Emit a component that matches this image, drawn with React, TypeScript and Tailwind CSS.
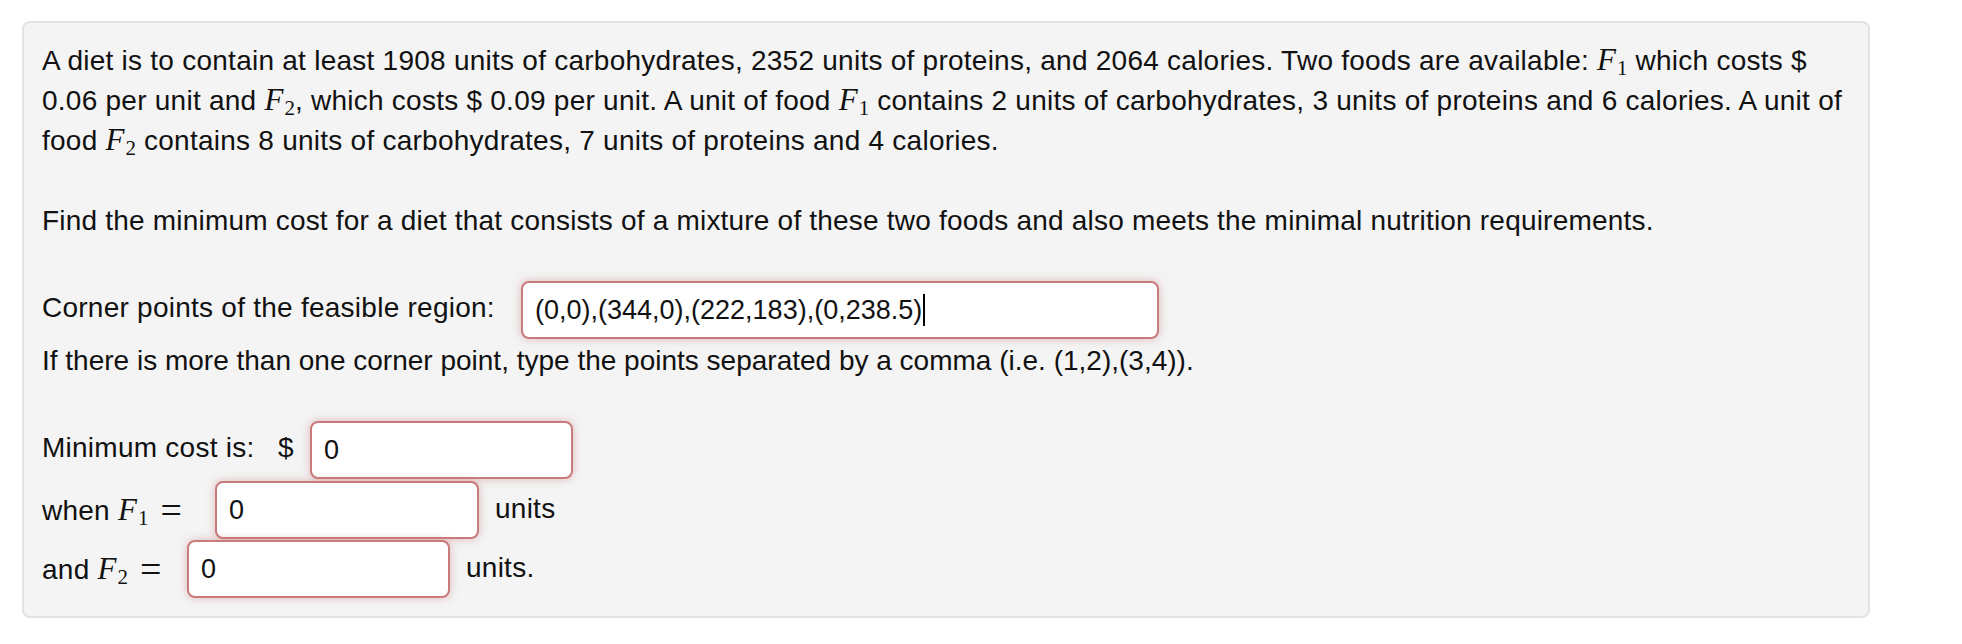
import React from "react";

const F = ({ n }: { n: string }) => (
  <span className="inline-flex items-baseline tracking-normal" style={{ fontFamily: '"Liberation Serif", "DejaVu Serif", serif' }}>
    <span className="italic text-[31px] leading-none">F</span>
    <span className="text-[21px] leading-none relative top-[5px] ml-[1px] not-italic">{n}</span>
  </span>
);

const Eq = () => (
  <span
    className="text-[38px] leading-none ml-[12px] tracking-normal relative top-[3px]"
    style={{ fontFamily: '"Liberation Serif", "DejaVu Serif", serif' }}
  >
    =
  </span>
);

const Box = ({ w, children }: { w: string; children: React.ReactNode }) => (
  <div
    className={`${w} h-[58px] shrink-0 flex items-center bg-white border-2 border-[#c97b7b] rounded-[8px] pl-[12px] text-[27px] tracking-normal shadow-[0_0_9px_rgba(201,123,123,0.5)]`}
  >
    {children}
  </div>
);

export default function App() {
  return (
    <div
      className="w-[1962px] h-[644px] bg-white text-[#111] text-[28px] leading-[40px] tracking-[0.25px] pt-[21px] pl-[22px]"
      style={{ fontFamily: '"Liberation Sans", Arial, sans-serif' }}
    >
      <div className="w-[1848px] bg-[#f4f4f4] border-2 border-[#e3e3e3] rounded-[8px] pt-[18px] pb-[18px] px-[18px]">
        <div className="whitespace-nowrap">
          <div>
            A diet is to contain at least 1908 units of carbohydrates, 2352 units of proteins, and 2064 calories. Two foods are available: <F n="1" /> which costs $
          </div>
          <div>
            0.06 per unit and <F n="2" />, which costs $ 0.09 per unit. A unit of food <F n="1" /> contains 2 units of carbohydrates, 3 units of proteins and 6 calories. A unit of
          </div>
          <div>
            food <F n="2" /> contains 8 units of carbohydrates, 7 units of proteins and 4 calories.
          </div>
        </div>
        <div className="mt-[40px] whitespace-nowrap tracking-[0.2px]">
          Find the minimum cost for a diet that consists of a mixture of these two foods and also meets the minimal nutrition requirements.
        </div>

        <div className="mt-[40px] flex items-center whitespace-nowrap">
          <span className="w-[479px] shrink-0 relative -top-[2px]">Corner points of the feasible region:</span>
          <Box w="w-[638px]">
            <span>(0,0),(344,0),(222,183),(0,238.5)</span>
            <span className="inline-block w-[2px] h-[32px] bg-black ml-[1px]" />
          </Box>
        </div>
        <div className="mt-[2px] whitespace-nowrap tracking-normal">
          If there is more than one corner point, type the points separated by a comma (i.e. (1,2),(3,4)).
        </div>

        <div className="mt-[40px] flex items-center whitespace-nowrap">
          <span className="w-[236px] shrink-0 relative -top-[2px]">Minimum cost is:</span>
          <span className="w-[32px] shrink-0 relative -top-[2px]">$</span>
          <Box w="w-[263px]">
            <span>0</span>
          </Box>
        </div>
        <div className="mt-[2px] flex items-center whitespace-nowrap">
          <span className="w-[173px] shrink-0 flex items-baseline relative -top-[1px]">
            when&nbsp;<F n="1" />
            <Eq />
          </span>
          <Box w="w-[264px]">
            <span>0</span>
          </Box>
          <span className="ml-[16px] relative -top-[1px]">units</span>
        </div>
        <div className="mt-[1px] flex items-center whitespace-nowrap">
          <span className="w-[145px] shrink-0 flex items-baseline relative -top-[1px]">
            and&nbsp;<F n="2" />
            <Eq />
          </span>
          <Box w="w-[263px]">
            <span>0</span>
          </Box>
          <span className="ml-[16px] relative -top-[1px]">units.</span>
        </div>
      </div>
    </div>
  );
}
